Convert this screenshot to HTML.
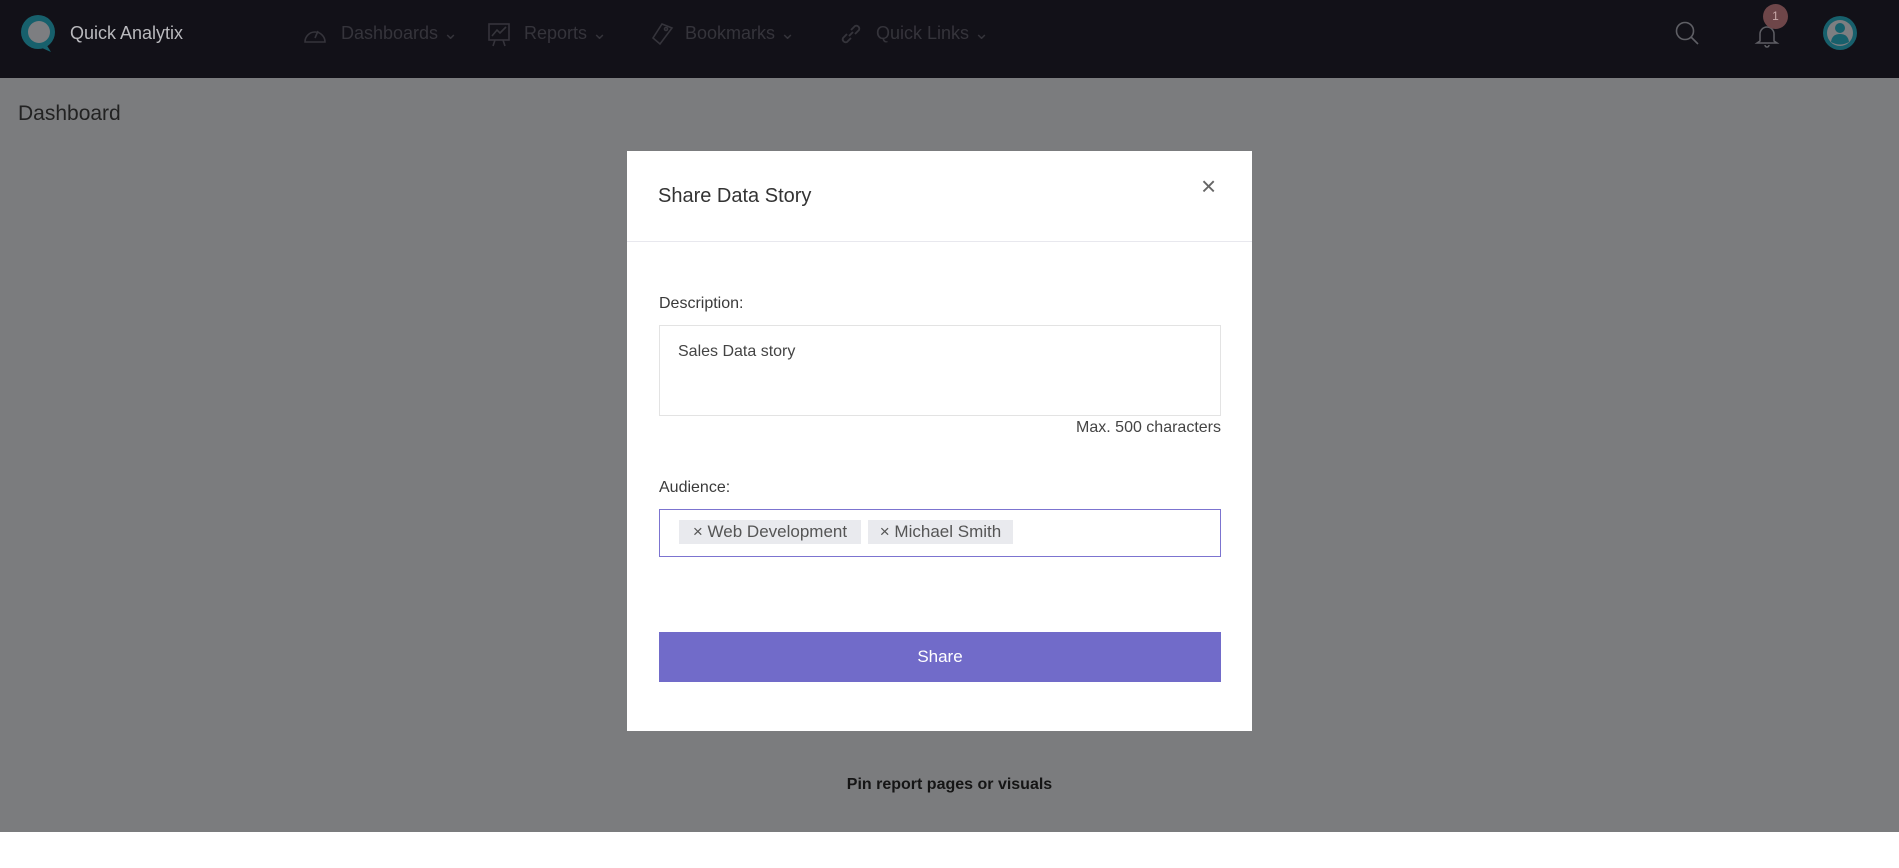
<!DOCTYPE html>
<html><head><meta charset="utf-8"><style>
*{box-sizing:border-box;margin:0;padding:0}
body{width:1899px;height:868px;background:#fff;font-family:"Liberation Sans",sans-serif;position:relative;overflow:hidden}
.nav{position:absolute;left:0;top:0;width:1899px;height:78px;background:#121118}
.bg{position:absolute;left:0;top:78px;width:1899px;height:754px;background:#7b7c7e}
.ab{position:absolute;white-space:nowrap}
.ni{color:#35343b;font-size:18px;top:23px}
.modal{position:absolute;left:627px;top:151px;width:625px;height:580px;background:#fff}
.lbl{color:#3a3a3a;font-size:16px}
.tag{position:absolute;top:369px;height:24px;background:#e9eaee;font-size:17px;color:#555;line-height:24px;text-align:center;white-space:nowrap}
</style></head><body>
<div class="nav"></div>
<div class="bg"></div>
<svg class="ab" style="left:20px;top:14px" width="38" height="40" viewBox="0 0 38 40"><circle cx="18" cy="18" r="17" fill="#17606c"/><circle cx="19" cy="18" r="11" fill="#7d7e81"/><path d="M26 30 L31 38 L22 34Z" fill="#17606c"/></svg>
<div class="ab" style="left:70px;top:23px;color:#b9b9bd;font-size:18px">Quick Analytix</div>
<svg class="ab" style="left:302px;top:22px" width="26" height="24" fill="none" stroke="#35343b" stroke-width="1.6"><path d="M3 20 A10 10 0 1 1 23 20 Z"/><path d="M13 16 L16 9"/></svg>
<div class="ab ni" style="left:341px">Dashboards &#8964;</div>
<svg class="ab" style="left:487px;top:22px" width="24" height="26" fill="none" stroke="#35343b" stroke-width="1.6"><rect x="2" y="2" width="20" height="16"/><path d="M5 14 L10 8 L13 11 L19 5 M8 18 L6 24 M16 18 L18 24"/></svg>
<div class="ab ni" style="left:524px">Reports &#8964;</div>
<svg class="ab" style="left:650px;top:22px" width="24" height="24" fill="none" stroke="#35343b" stroke-width="1.6"><path d="M12 2 L22 6 L10 22 L3 16 Z"/><circle cx="16" cy="7" r="1.5"/></svg>
<div class="ab ni" style="left:685px">Bookmarks &#8964;</div>
<svg class="ab" style="left:839px;top:22px" width="24" height="24" fill="none" stroke="#35343b" stroke-width="1.8"><path d="M10 14 L14 10 M8 12 L4 16 a3 3 0 0 0 4 4 L12 16 M16 12 L20 8 a3 3 0 0 0 -4 -4 L12 8"/></svg>
<div class="ab ni" style="left:876px">Quick Links &#8964;</div>
<svg class="ab" style="left:1674px;top:20px" width="28" height="28" fill="none" stroke="#5f5f65" stroke-width="1.6"><circle cx="11" cy="11" r="8.5"/><path d="M17 17 L24 24"/></svg>
<svg class="ab" style="left:1754px;top:22px" width="26" height="26" fill="none" stroke="#5f5f65" stroke-width="1.5"><path d="M6 19 L6 12 a7 7 0 0 1 14 0 L20 19 L23 21 L3 21 Z M11 23 a2 2 0 0 0 4 0"/></svg>
<div class="ab" style="left:1763px;top:4px;width:25px;height:25px;border-radius:50%;background:#6e4649;color:#c9a9a9;font-size:12px;text-align:center;line-height:25px">1</div>
<svg class="ab" style="left:1822px;top:15px" width="36" height="36"><circle cx="18" cy="18" r="17" fill="#17606c"/><circle cx="18" cy="18" r="13" fill="#7d7e81"/><circle cx="18" cy="13" r="5" fill="#17606c"/><path d="M9 27 Q10 19 18 19 Q26 19 27 27 Q18 32 9 27Z" fill="#17606c"/></svg>
<div class="ab" style="left:18px;top:102px;color:#222;font-size:21px">Dashboard</div>
<div class="ab" style="left:0;width:1899px;top:776px;text-align:center;color:#151515;font-size:16px;font-weight:bold">Pin report pages or visuals</div>
<div class="modal">
 <div class="ab" style="left:31px;top:34px;color:#333;font-size:20px">Share Data Story</div>
 <div class="ab" style="left:574px;top:20px;color:#666;font-size:26px;font-weight:300">&#215;</div>
 <div class="ab" style="left:0;top:90px;width:625px;border-top:1px solid #e8e8ee"></div>
 <div class="ab lbl" style="left:32px;top:144px">Description:</div>
 <div class="ab" style="left:32px;top:174px;width:562px;height:91px;border:1px solid #e3e3e3"></div>
 <div class="ab" style="left:51px;top:192px;font-size:16px;color:#444">Sales Data story</div>
 <div class="ab" style="left:0;top:268px;width:594px;text-align:right;font-size:16px;color:#444">Max. 500 characters</div>
 <div class="ab lbl" style="left:32px;top:328px">Audience:</div>
 <div class="ab" style="left:32px;top:358px;width:562px;height:48px;border:1px solid #7c74d0"></div>
 <div class="tag" style="left:52px;width:182px">&#215; Web Development</div>
 <div class="tag" style="left:241px;width:145px">&#215; Michael Smith</div>
 <div class="ab" style="left:32px;top:481px;width:562px;height:50px;background:#716bc9;color:#fff;font-size:17px;text-align:center;line-height:50px">Share</div>
</div>
</body></html>
